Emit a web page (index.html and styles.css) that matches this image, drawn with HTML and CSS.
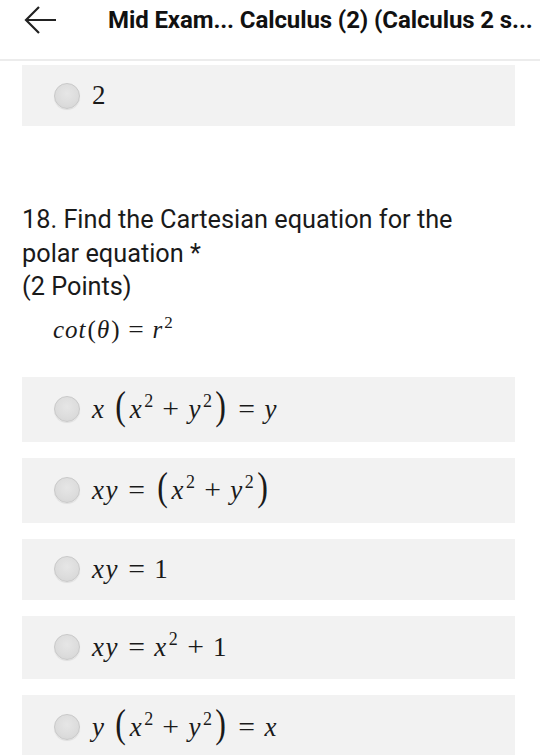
FILE: index.html
```html
<!DOCTYPE html>
<html>
<head>
<meta charset="utf-8">
<link rel="stylesheet" href="styles.css">
</head>
<body>
<header class="topbar">
  <svg class="back" width="34" height="30" viewBox="0 0 34 30"><path d="M32 15H3M15 2L2 15l13 13" fill="none" stroke="#222" stroke-width="2.2"/></svg>
  <div class="title">Mid Exam... Calculus (2) (Calculus 2 s...</div>
</header>
<main class="content">
  <div class="option first">
    <span class="radio"></span>
    <span class="math"><span class="n">2</span></span>
  </div>

  <div class="question">
    <div class="qtext">18. Find the Cartesian equation for the polar equation *</div>
    <div class="points">(2 Points)</div>
  </div>
  <div class="formula math"><i>cot</i><span class="fp">(</span><i>θ</i><span class="fp">)</span><span class="op">=</span><i>r</i><sup>2</sup></div>

  <div class="options">
    <div class="option tall">
      <span class="radio"></span>
      <span class="math"><i>x</i><span class="paren sp">(</span><i>x</i><sup>2</sup><span class="op">+</span><i>y</i><sup>2</sup><span class="paren">)</span><span class="op">=</span><i>y</i></span>
    </div>
    <div class="option tall">
      <span class="radio"></span>
      <span class="math"><i>xy</i><span class="op">=</span><span class="paren">(</span><i>x</i><sup>2</sup><span class="op">+</span><i>y</i><sup>2</sup><span class="paren">)</span></span>
    </div>
    <div class="option">
      <span class="radio"></span>
      <span class="math"><i>xy</i><span class="op">=</span><span class="n">1</span></span>
    </div>
    <div class="option mid">
      <span class="radio"></span>
      <span class="math"><i>xy</i><span class="op">=</span><i>x</i><sup>2</sup><span class="op">+</span><span class="n">1</span></span>
    </div>
    <div class="option tall">
      <span class="radio"></span>
      <span class="math"><i>y</i><span class="paren sp">(</span><i>x</i><sup>2</sup><span class="op">+</span><i>y</i><sup>2</sup><span class="paren">)</span><span class="op">=</span><i>x</i></span>
    </div>
  </div>
</main>
</body>
</html>
```

FILE: styles.css
```css
html, body {
  margin: 0;
  padding: 0;
  background: #fff;
}
body {
  font-family: Roboto, "Noto Sans", sans-serif;
  color: #1a1a1a;
  width: 540px;
  overflow: hidden;
}
.topbar {
  height: 61px;
  box-sizing: border-box;
  display: flex;
  align-items: flex-start;
  padding: 4px 0 0 24px;
  border-bottom: 2px solid #ececec;
}
.back {
  display: block;
  margin-top: 1px;
}
.title {
  margin-left: 50px;
  font-size: 24px;
  font-weight: 700;
  line-height: 28px;
  margin-top: 2px;
  color: #111;
  white-space: nowrap;
  letter-spacing: -0.1px;
}
.content {
  padding: 4px 25px 0 22px;
}
.option {
  background: #f2f2f2;
  height: 61px;
  display: flex;
  align-items: center;
  padding-left: 32px;
  box-sizing: border-box;
}
.option.tall { height: 65px; }
.option.mid { height: 63px; }
.options {
  display: flex;
  flex-direction: column;
  gap: 16px;
}
.radio {
  width: 26px;
  height: 26px;
  border-radius: 50%;
  box-sizing: border-box;
  border: 1px solid #c9c9c9;
  background: radial-gradient(circle at 50% 40%, #e6e6e6 0%, #dcdcdc 60%, #d2d2d2 100%);
  box-shadow: 0 1px 1px rgba(0,0,0,0.08);
  flex: none;
  margin-right: 12px;
}
.math {
  font-family: "Liberation Serif", "Times New Roman", serif;
  font-size: 27px;
  color: #1a1a1a;
  white-space: pre;
}
.math i {
  font-style: italic;
  letter-spacing: 1.5px;
}
.math sup {
  font-size: 18px;
  vertical-align: 0;
  position: relative;
  top: -11px;
  line-height: 0;
  margin-left: 1px;
}
.math .op {
  display: inline-block;
  padding: 0 10px;
  transform: scaleX(1.1);
}
.math .paren {
  display: inline-block;
  font-size: 40px;
  line-height: 0;
  position: relative;
  top: 1px;
  transform: scaleX(0.8);
  margin: 0 2px;
}
.math .paren.sp { margin-left: 9px; }
.question {
  margin-top: 77px;
  font-size: 25.3px;
  line-height: 33.5px;
  color: #1a1a1a;
  padding-right: 40px;
}
.formula {
  margin: 11px 0 0 31px;
  font-size: 25px;
  line-height: 30px;
  height: 30px;
  margin-bottom: 32px;
}
.formula i { letter-spacing: 1px; }
.formula .fp { padding: 0 1px; }
.formula .op { padding: 0 9px; }
.formula sup { font-size: 17px; top: -10px; }
```
